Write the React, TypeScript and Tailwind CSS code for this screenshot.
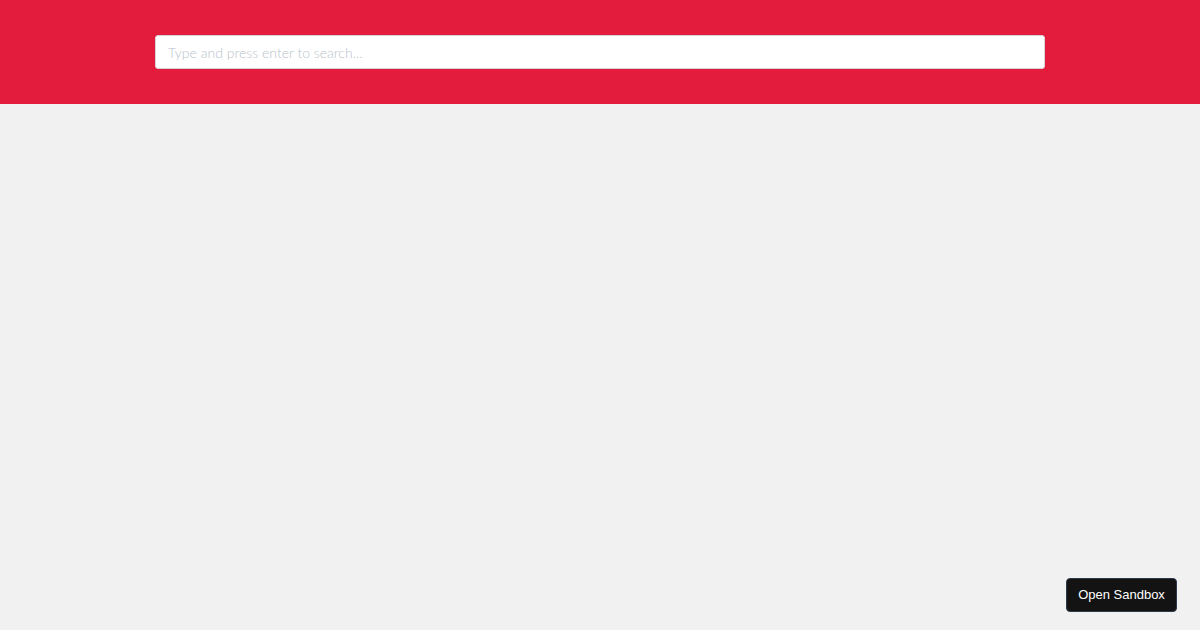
import * as React from 'react';

export default function App() {
  const [query, setQuery] = React.useState('');

  return (
    <div className="flex h-[630px] w-[1200px] flex-col bg-[#f1f1f1]">
      <header className="flex h-[104px] shrink-0 items-start justify-center bg-[#e31b3d] pt-[35px]">
        <input
          value={query}
          placeholder="Type and press enter to search..."
          className="h-[34px] w-[890px] rounded-[3px] border border-[#d4d4d4] bg-white px-3 font-['Lato',sans-serif] text-[14px] font-light text-[#333] outline-none placeholder:text-[#b8c4cc]"
          onChange={(event) => setQuery(event.target.value)}
        />
      </header>

      <main className="flex flex-1 items-end justify-end px-[23px] pb-[18px]">
        <button
          type="button"
          className="h-[34px] w-[111px] rounded-[4px] border border-[#2c3a4a] bg-[#131313] font-['Liberation_Sans',Arial,sans-serif] text-[13px] text-white"
        >
          Open Sandbox
        </button>
      </main>
    </div>
  );
}
